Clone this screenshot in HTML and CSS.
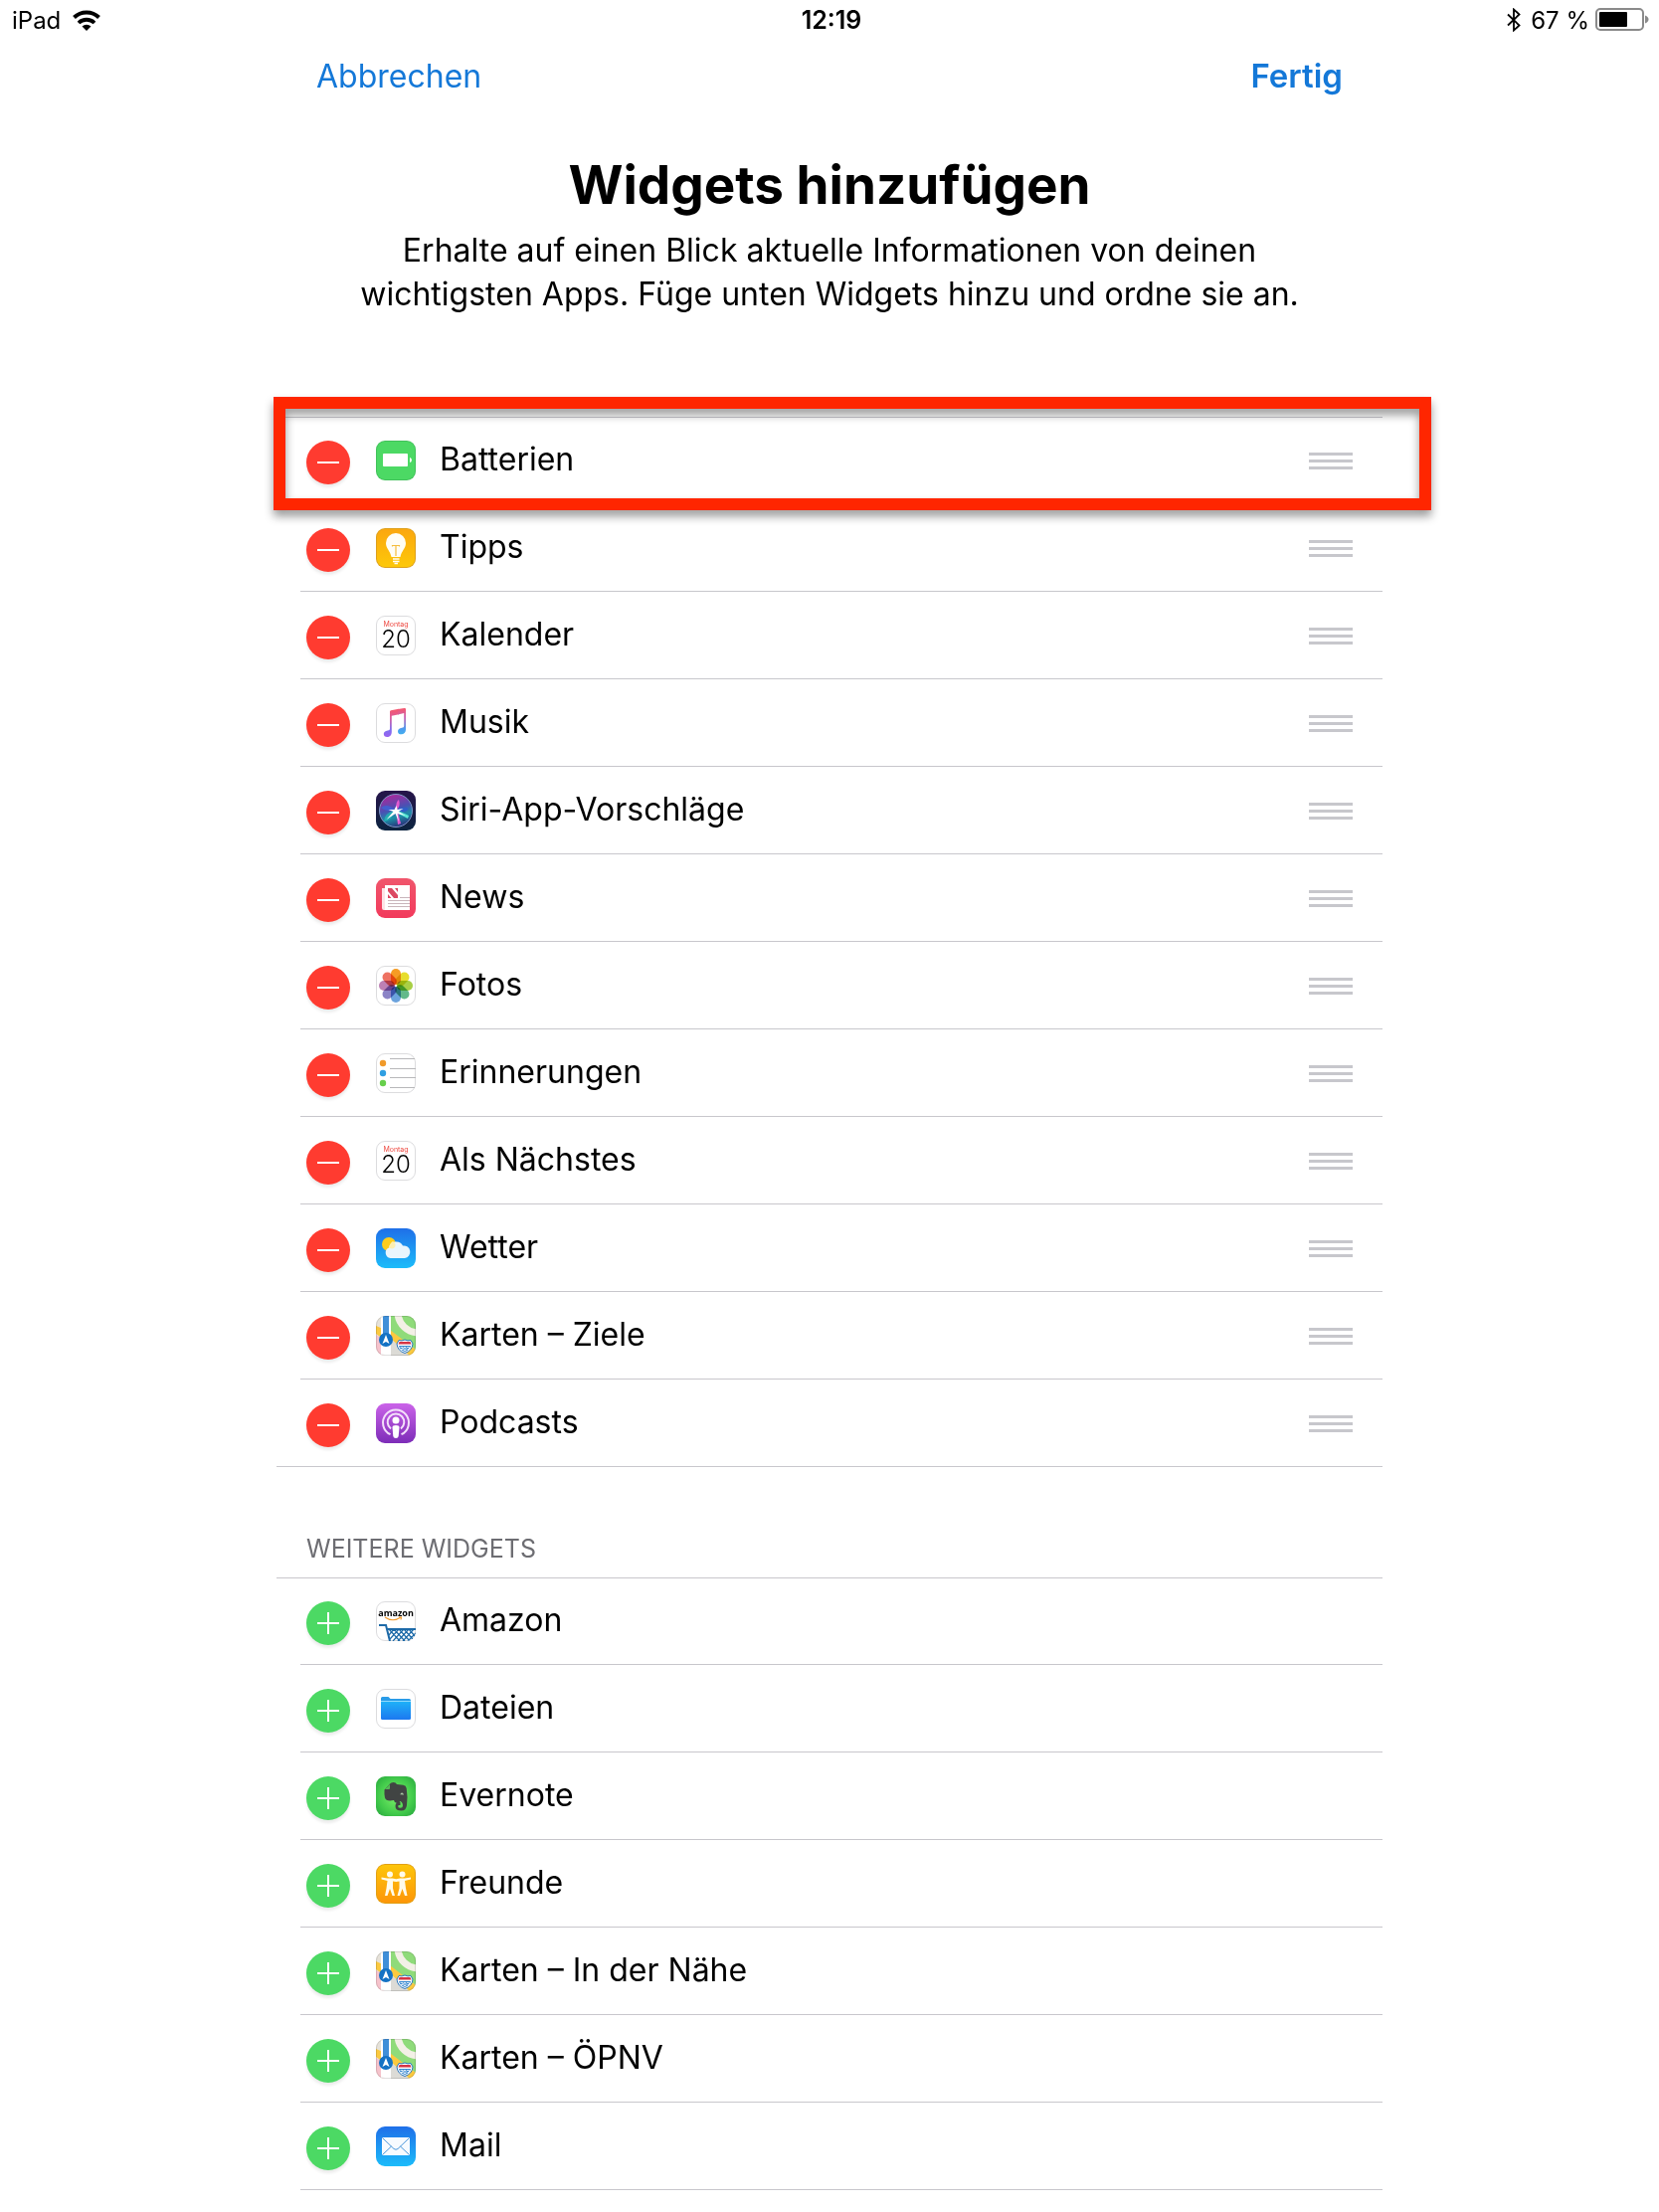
FILE: index.html
```html
<!DOCTYPE html>
<html lang="de">
<head>
    <meta charset="UTF-8">
    <meta name="viewport" content="width=device-width, initial-scale=1.0">
    <title>Widgets hinzufügen</title>
    <link rel="stylesheet" href="styles.css">
</head>
<body>
    <!-- shared icons -->
    <svg class="sprite" aria-hidden="true">
        <defs>
            <linearGradient id="tips-bg" x1="0" y1="0" x2="0" y2="1"><stop offset="0" stop-color="#fba70f"/><stop offset="1" stop-color="#fdc809"/></linearGradient>
            <linearGradient id="note" x1="0" y1="0" x2="0" y2="1"><stop offset="0" stop-color="#f7566b"/><stop offset=".3" stop-color="#dd5c9c"/><stop offset=".75" stop-color="#7e6ff0"/><stop offset="1" stop-color="#9b62f0"/></linearGradient>
            <linearGradient id="note-right" x1="0" y1="0" x2="0" y2="1"><stop offset="0" stop-color="#f7566b"/><stop offset=".35" stop-color="#c963b4"/><stop offset=".8" stop-color="#4a9cf0"/><stop offset="1" stop-color="#45b0ee"/></linearGradient>
            <linearGradient id="siri-bg" x1="0" y1="0" x2="0" y2="1"><stop offset="0" stop-color="#26154a"/><stop offset="1" stop-color="#0c2440"/></linearGradient>
            <linearGradient id="siri-orb" x1=".3" y1="0" x2=".6" y2="1"><stop offset="0" stop-color="#b0269a"/><stop offset=".45" stop-color="#4a50b4"/><stop offset=".7" stop-color="#1c8fa6"/><stop offset="1" stop-color="#2b2a78"/></linearGradient>
            <linearGradient id="news-bg" x1="0" y1="0" x2="0" y2="1"><stop offset="0" stop-color="#f0566c"/><stop offset="1" stop-color="#f23a5c"/></linearGradient>
            <linearGradient id="sky" x1="0" y1="0" x2="0" y2="1"><stop offset="0" stop-color="#1f6fe8"/><stop offset="1" stop-color="#1cbcfa"/></linearGradient>
            <linearGradient id="podcasts-bg" x1="0" y1="0" x2="0" y2="1"><stop offset="0" stop-color="#cb63e9"/><stop offset="1" stop-color="#7d2db8"/></linearGradient>
            <linearGradient id="folder" x1="0" y1="0" x2="0" y2="1"><stop offset="0" stop-color="#1fb2f8"/><stop offset="1" stop-color="#1c78f0"/></linearGradient>
            <radialGradient id="evernote-bg" r=".7"><stop offset="0" stop-color="#7cf06a"/><stop offset=".6" stop-color="#44cc4c"/><stop offset="1" stop-color="#25a53c"/></radialGradient>
            <linearGradient id="friends-bg" x1="0" y1="0" x2="0" y2="1"><stop offset="0" stop-color="#fdc50a"/><stop offset="1" stop-color="#fd9608"/></linearGradient>
            <clipPath id="tile"><rect width="40" height="40" rx="9"/></clipPath>
        </defs>
        <symbol id="maps" viewBox="0 0 40 40">
            <g clip-path="url(#tile)">
                <rect width="40" height="40" fill="#e6e2d9"/>
                <path d="M14 0h26v34L14 15z" fill="#8fdb7a"/>
                <path d="M0 19l14 8v13H0z" fill="#f6c3cc"/>
                <path d="M0 10v8l14 10V16z" fill="#fbc93f"/>
                <path d="M14 14l26 20v6h-9L14 22z" fill="#fbc93f"/>
                <path d="M14 22l20 18H14z" fill="#dcdbd6"/>
                <path d="M22-2a21 21 0 0 0 20 19" fill="none" stroke="#f3f0e6" stroke-width="7"/>
                <path d="M5 0h10v40H5z" fill="#fff"/>
                <path d="M7 0h6v22H7z" fill="#3f8fd8"/>
                <circle cx="10" cy="24" r="7" fill="#1472c4"/>
                <path d="M10 19l3.500 9L10 26l-3.500 2z" fill="#fff"/>
                <path d="M23 24.500q3 1 6-.500 3 1.500 6 .500l2 3.500q-.500 7-8 9.500-7.500-2.500-8-9.500z" fill="#fff" stroke="#2c77bd"/>
                <path d="M23.500 26h11l1 2.500h-13z" fill="#d53445"/>
                <path d="M23 30h12q-1 4.500-6 6-5-1.500-6-6z" fill="#3586cf"/>
                <path d="M24.500 31.500h2.500v2h-2M28 31.500h2v3h-2zM31 31.500h2.500v2h-2" fill="none" stroke="#fff" stroke-width=".8"/>
            </g>
            <rect x=".5" y=".5" width="39" height="39" rx="8.5" fill="none" stroke="#000" stroke-opacity=".12"/>
        </symbol>
    </svg>

    <header class="status-bar">
        <div class="status-left">
            <span>iPad</span>
            <svg class="wifi" viewBox="0 0 28 21" aria-label="WLAN">
                <path d="M1.500 7.500a18 18 0 0 1 25 0" fill="none" stroke="#000" stroke-width="4"/>
                <path d="M6 13a11.500 11.500 0 0 1 16 0" fill="none" stroke="#000" stroke-width="3.800"/>
                <path d="M9.500 16.500a6.500 6.500 0 0 1 9 0L14 21z"/>
            </svg>
        </div>
        <time class="clock">12:19</time>
        <div class="status-right">
            <svg class="bluetooth" viewBox="0 0 14 24" aria-label="Bluetooth">
                <path d="M1 6.500l11.500 11L7 22.500v-21l5.500 5L1 17.500" fill="none" stroke="#000" stroke-width="1.800"/>
            </svg>
            <span>67 %</span>
            <svg class="battery" viewBox="0 0 54 24" aria-label="Batterie">
                <rect x="1" y="1" width="47" height="21" rx="4" fill="#fff" stroke="#8a8a8a" stroke-width="2"/>
                <rect x="4" y="4" width="28" height="15" rx="1" />
                <path d="M50 7.500q3.500 1.500 3.500 4t-3.500 4z" fill="#8a8a8a"/>
            </svg>
        </div>
    </header>

    <main class="page">
        <nav class="toolbar">
            <button class="cancel">Abbrechen</button>
            <button class="done">Fertig</button>
        </nav>

        <h1>Widgets hinzufügen</h1>
        <p class="intro">Erhalte auf einen Blick aktuelle Informationen von deinen<br>wichtigsten Apps. Füge unten Widgets hinzu und ordne sie an.</p>

        <ul class="widgets active">
            <li class="row highlighted">
                <button class="toggle remove" aria-label="Batterien entfernen"></button>
                <svg class="app-icon" viewBox="0 0 40 40">
                    <rect width="40" height="40" rx="9" fill="#42c15b"/>
                    <rect x="1" y="1" width="38" height="38" rx="8" fill="#4cd964"/>
                    <rect x="7" y="13" width="25" height="13" rx="1" fill="#fff"/>
                    <path d="M34 17q2 .500 2 2.500t-2 2.500z" fill="#fff"/>
                </svg>
                <span class="name">Batterien</span>
                <button class="handle" aria-label="Batterien verschieben"></button>
            </li>
            <li class="row">
                <button class="toggle remove" aria-label="Tipps entfernen"></button>
                <svg class="app-icon" viewBox="0 0 40 40">
                    <rect width="40" height="40" rx="9" fill="#dda01c"/>
                    <rect x="1" y="1" width="38" height="38" rx="8" fill="url(#tips-bg)"/>
                    <path d="M20 5a10 10 0 0 1 10 10c0 5.500-4.500 8-5.500 14h-9C14.500 23 10 20.500 10 15A10 10 0 0 1 20 5z" fill="#fffdf4"/>
                    <path d="M17 31h6.500M17 33.500h6.500M18.500 35.500h3.500" stroke="#fffdf4" stroke-width="1.300"/>
                    <path d="M16.500 18.500v-1h7v1M20 17.500V28" fill="none" stroke="#f5bd3c" stroke-width="1.200"/>
                </svg>
                <span class="name">Tipps</span>
                <button class="handle" aria-label="Tipps verschieben"></button>
            </li>
            <li class="row">
                <button class="toggle remove" aria-label="Kalender entfernen"></button>
                <svg class="app-icon" viewBox="0 0 40 40">
                    <rect x=".5" y=".5" width="39" height="39" rx="8.500" fill="#fff" stroke="#dcdcde"/>
                    <text x="20" y="11" class="cal-day">Montag</text>
                    <text x="20" y="32" class="cal-date">20</text>
                </svg>
                <span class="name">Kalender</span>
                <button class="handle" aria-label="Kalender verschieben"></button>
            </li>
            <li class="row">
                <button class="toggle remove" aria-label="Musik entfernen"></button>
                <svg class="app-icon" viewBox="0 0 40 40">
                    <rect x=".5" y=".5" width="39" height="39" rx="8.500" fill="#fff" stroke="#dcdcde"/>
                    <path d="M14 8.500q0-1 1-1.200l8-1.500v5.500l-7.200 1.500V29c0 3-2 5-4.600 5-2 0-3.400-1.200-3.400-3s1.400-3.200 4-3.600c1.600-.300 2.200-.700 2.200-2z" fill="url(#note)"/>
                    <path d="M22 6l6.500-1q1.500-.200 1.500 1v20.500c0 3-2 4.800-4.500 4.800-2 0-3.500-1-3.500-2.900 0-2 1.500-3.200 4-3.600 1.600-.300 2.200-.700 2.200-2V10L22 11.500z" fill="url(#note-right)"/>
                </svg>
                <span class="name">Musik</span>
                <button class="handle" aria-label="Musik verschieben"></button>
            </li>
            <li class="row">
                <button class="toggle remove" aria-label="Siri-App-Vorschläge entfernen"></button>
                <svg class="app-icon" viewBox="0 0 40 40">
                    <rect width="40" height="40" rx="9" fill="url(#siri-bg)"/>
                    <circle cx="20" cy="20" r="16.500" fill="url(#siri-orb)" stroke="#7d96c6"/>
                    <path d="M19 19Q11 12 5 17q5 4 14 3z" fill="#3d63d8" opacity=".8"/>
                    <path d="M20 19q8-4 13-1-3 5-12 2z" fill="#2d5bd0" opacity=".8"/>
                    <path d="M18 20Q9 22 8 31q8-1 11-10z" fill="#22b8b4" opacity=".8"/>
                    <path d="M20 18q0-7 3-9 2 6-2 10zM20 20l2 14 3-1-3-12z" fill="#e45ad0"/>
                    <path d="M20 19l13 6-1 3-13-7z" fill="#59e8d4"/>
                    <path d="M20.500 15l1 4 6-1-5 3 7 4-8-2 1.500 8-3.500-8-9 6 7-8-5-2 6 0z" fill="#fff"/>
                </svg>
                <span class="name">Siri-App-Vorschläge</span>
                <button class="handle" aria-label="Siri-App-Vorschläge verschieben"></button>
            </li>
            <li class="row">
                <button class="toggle remove" aria-label="News entfernen"></button>
                <svg class="app-icon" viewBox="0 0 40 40">
                    <rect width="40" height="40" rx="9" fill="url(#news-bg)"/>
                    <path d="M6 10h3v22H8q-2 0-2-2z" fill="#fde3e6"/>
                    <path d="M9 7h25v25H9z" fill="#fff"/>
                    <path d="M12 10h4l6 7v3h-4l-6-7zM19 10h3v4zM12 16l3.500 4H12z" fill="#dc4962"/>
                    <path d="M24 19.500h10M12 22.500h22M12 25.500h22M12 28.500h22" stroke="#c9b5bb"/>
                </svg>
                <span class="name">News</span>
                <button class="handle" aria-label="News verschieben"></button>
            </li>
            <li class="row">
                <button class="toggle remove" aria-label="Fotos entfernen"></button>
                <svg class="app-icon" viewBox="0 0 40 40">
                    <rect x=".5" y=".5" width="39" height="39" rx="8.500" fill="#fff" stroke="#dcdcde"/>
                    <g class="petals">
                        <rect x="15" y="3" width="10" height="16" rx="5" fill="#f69c25"/>
                        <rect x="15" y="3" width="10" height="16" rx="5" fill="#e7dd2c" transform="rotate(45 20 20)"/>
                        <rect x="15" y="3" width="10" height="16" rx="5" fill="#a8cf45" transform="rotate(90 20 20)"/>
                        <rect x="15" y="3" width="10" height="16" rx="5" fill="#62b98a" transform="rotate(135 20 20)"/>
                        <rect x="15" y="3" width="10" height="16" rx="5" fill="#6ba3dd" transform="rotate(180 20 20)"/>
                        <rect x="15" y="3" width="10" height="16" rx="5" fill="#8b83c6" transform="rotate(225 20 20)"/>
                        <rect x="15" y="3" width="10" height="16" rx="5" fill="#bd80b4" transform="rotate(270 20 20)"/>
                        <rect x="15" y="3" width="10" height="16" rx="5" fill="#ee7262" transform="rotate(315 20 20)"/>
                    </g>
                </svg>
                <span class="name">Fotos</span>
                <button class="handle" aria-label="Fotos verschieben"></button>
            </li>
            <li class="row">
                <button class="toggle remove" aria-label="Erinnerungen entfernen"></button>
                <svg class="app-icon" viewBox="0 0 40 40">
                    <rect x=".5" y=".5" width="39" height="39" rx="8.500" fill="#fff" stroke="#dcdcde"/>
                    <circle cx="7" cy="10" r="3.200" fill="#f09a2a"/>
                    <circle cx="7" cy="20" r="3.200" fill="#2f9fe2"/>
                    <circle cx="7" cy="30" r="3.200" fill="#67cf4c"/>
                    <path d="M14 5.500h25M14 15.500h26M14 24.500h26M14 34.500h25" stroke="#b8b8ba"/>
                </svg>
                <span class="name">Erinnerungen</span>
                <button class="handle" aria-label="Erinnerungen verschieben"></button>
            </li>
            <li class="row">
                <button class="toggle remove" aria-label="Als Nächstes entfernen"></button>
                <svg class="app-icon" viewBox="0 0 40 40">
                    <rect x=".5" y=".5" width="39" height="39" rx="8.500" fill="#fff" stroke="#dcdcde"/>
                    <text x="20" y="11" class="cal-day">Montag</text>
                    <text x="20" y="32" class="cal-date">20</text>
                </svg>
                <span class="name">Als Nächstes</span>
                <button class="handle" aria-label="Als Nächstes verschieben"></button>
            </li>
            <li class="row">
                <button class="toggle remove" aria-label="Wetter entfernen"></button>
                <svg class="app-icon" viewBox="0 0 40 40">
                    <rect width="40" height="40" rx="9" fill="url(#sky)"/>
                    <circle cx="13" cy="16" r="7" fill="#fdcd1e"/>
                    <path d="M14.500 30a5.500 5.500 0 0 1-1.500-10.500A7.500 7.500 0 0 1 27 17.500a6.300 6.300 0 1 1 2 12.500z" fill="#e9f5fd"/>
                    <path d="M13 19.500q.500-4 4-6.500 3 1.500 2.500 5-1.500 4-6.500 1.500z" fill="#fdeeb0"/>
                </svg>
                <span class="name">Wetter</span>
                <button class="handle" aria-label="Wetter verschieben"></button>
            </li>
            <li class="row">
                <button class="toggle remove" aria-label="Karten – Ziele entfernen"></button>
                <svg class="app-icon"><use href="#maps"/></svg>
                <span class="name">Karten – Ziele</span>
                <button class="handle" aria-label="Karten – Ziele verschieben"></button>
            </li>
            <li class="row">
                <button class="toggle remove" aria-label="Podcasts entfernen"></button>
                <svg class="app-icon" viewBox="0 0 40 40">
                    <rect width="40" height="40" rx="9" fill="url(#podcasts-bg)"/>
                    <path d="M14.500 31.200a13 13 0 1 1 11 0M15 25.500a8.300 8.300 0 1 1 10 0" fill="none" stroke="#f3e0fa" stroke-width="2"/>
                    <circle cx="20" cy="17" r="3.500" fill="#fff"/>
                    <path d="M16.500 24q0-2 3.500-2t3.500 2l-.800 9q-.300 2-2.700 2t-2.700-2z" fill="#fff"/>
                </svg>
                <span class="name">Podcasts</span>
                <button class="handle" aria-label="Podcasts verschieben"></button>
            </li>
        </ul>

        <h2>WEITERE WIDGETS</h2>

        <ul class="widgets">
            <li class="row">
                <button class="toggle add" aria-label="Amazon hinzufügen"></button>
                <svg class="app-icon" viewBox="0 0 40 40">
                    <rect x=".5" y=".5" width="39" height="39" rx="8.500" fill="#fff" stroke="#dcdcde"/>
                    <text x="20" y="15" class="amazon">amazon</text>
                    <path d="M9 16q8 5.500 16 0M23 16h2.500l-.500 2.500" fill="none" stroke="#f39a2b" stroke-width="1.200"/>
                    <g clip-path="url(#tile)" fill="none" stroke="#1d6aa8">
                        <path d="M3 24h7l4 16" stroke-width="2"/>
                        <path d="M11 28h29" stroke-width="2"/>
                        <path d="M13 28l11 12M18 28l11 12M23 28l11 12M28 28l9 10M33 28l7 8M18 28l-5 6M23 28l-9 10M28 28L17 40M33 28L22 40M38 28L27 40M40 32l-8 8" stroke-width="1.200"/>
                    </g>
                </svg>
                <span class="name">Amazon</span>
            </li>
            <li class="row">
                <button class="toggle add" aria-label="Dateien hinzufügen"></button>
                <svg class="app-icon" viewBox="0 0 40 40">
                    <rect x=".5" y=".5" width="39" height="39" rx="8.500" fill="#fff" stroke="#dcdcde"/>
                    <path d="M5 12V9.500Q5 8 6.500 8H12q1 0 1.500 1t1.500 1h18.500q1.500 0 1.500 2z" fill="#2a9ce8"/>
                    <path d="M5 12.500h30V29.500q0 1.500-1.500 1.500h-27Q5 31 5 29.500z" fill="url(#folder)"/>
                </svg>
                <span class="name">Dateien</span>
            </li>
            <li class="row">
                <button class="toggle add" aria-label="Evernote hinzufügen"></button>
                <svg class="app-icon" viewBox="0 0 40 40">
                    <rect width="40" height="40" rx="9" fill="url(#evernote-bg)"/>
                    <path d="M8.500 13.500L14 7.500q1-1.500 3.500-1.500 2.500 0 3.500 2l6.500.800q2.800.400 3.200 3.200 1.500 9 .300 17-.600 5.500-5.500 5.500-6 0-6-4.500 0-4 4-4h1v3h-1.300q-1 0-1 1.200 0 1.600 2.500 1.600 2.300 0 2.300-2.300 0-3.500-2.500-4.500-1.500 2.500-4.500 1.500-1.500-.500-2-2.500-8 1.500-9-2.500-.800-3-.500-7z" fill="#414443"/>
                    <path d="M9 13l5-5v4q0 1-1 1z" fill="#54b957"/>
                    <path d="M24.500 18.500q0-2 1.600-2t1.700 2.300q-1.300-.800-3.300-.300z" fill="#a9c7a4"/>
                </svg>
                <span class="name">Evernote</span>
            </li>
            <li class="row">
                <button class="toggle add" aria-label="Freunde hinzufügen"></button>
                <svg class="app-icon" viewBox="0 0 40 40">
                    <rect width="40" height="40" rx="9" fill="#e2a014"/>
                    <rect x="1" y="1" width="38" height="38" rx="8" fill="url(#friends-bg)"/>
                    <g fill="#fffbea">
                        <circle cx="14" cy="10.500" r="3"/>
                        <circle cx="26.500" cy="10.500" r="3"/>
                        <path d="M5.500 13.500l6 1h5l3.800.700 3.700-.700h5l6-1v2l-6 1.500 1 7.500 1.500 7.500H29L26.500 25 24 32h-2.500l2-7.500v-7l-3.200.500-3.300-.500v7l2 7.500H16.500L14 25l-2.500 7H9l1.500-7.500 1-7.500-6-1.500z"/>
                    </g>
                </svg>
                <span class="name">Freunde</span>
            </li>
            <li class="row">
                <button class="toggle add" aria-label="Karten – In der Nähe hinzufügen"></button>
                <svg class="app-icon"><use href="#maps"/></svg>
                <span class="name">Karten – In der Nähe</span>
            </li>
            <li class="row">
                <button class="toggle add" aria-label="Karten – ÖPNV hinzufügen"></button>
                <svg class="app-icon"><use href="#maps"/></svg>
                <span class="name">Karten – ÖPNV</span>
            </li>
            <li class="row">
                <button class="toggle add" aria-label="Mail hinzufügen"></button>
                <svg class="app-icon" viewBox="0 0 40 40">
                    <rect width="40" height="40" rx="9" fill="url(#sky)"/>
                    <rect x="6" y="11" width="28" height="18" rx="1" fill="#f7fbff"/>
                    <path d="M6.500 11.500L18 22.500q2 1.500 4 0l11.500-11M6.500 28.500l9-8.500M33.500 28.500l-9-8.500" fill="none" stroke="#4a97dc"/>
                </svg>
                <span class="name">Mail</span>
            </li>
        </ul>
    </main>
</body>
</html>
```

FILE: styles.css
```css
body {
    margin: 0;
    background-color: #fff;
    color: #000;
    font-family: Inter, "Liberation Sans", sans-serif;
}
button {
    padding: 0;
    border: none;
    background: none;
    font-family: inherit;
    cursor: pointer;
}
.sprite {
    position: absolute;
    width: 0;
    height: 0;
}

/* status bar */
.status-bar {
    display: grid;
    grid-template-columns: 1fr auto 1fr;
    align-items: center;
    height: 40px;
    padding: 0 8px 0 12px;
    font-size: 24px;
}
.status-left,
.status-right {
    display: flex;
    align-items: center;
}
.status-left {
    gap: 12px;
}
.status-right {
    justify-content: flex-end;
    gap: 6px;
    padding-right: 2px;
}
.clock {
    font-size: 25px;
    font-weight: 600;
}
.wifi {
    width: 28px;
    height: 21px;
}
.bluetooth {
    width: 14px;
    height: 24px;
    margin-right: 4px;
}
.battery {
    width: 54px;
    height: 24px;
}

/* header */
.page {
    width: calc(100% * 2 / 3);
    margin: 0 auto;
}
.toolbar {
    display: flex;
    justify-content: space-between;
    height: 72px;
    padding: 0 40px;
}
.toolbar button {
    font-size: 32px;
    color: #1478d8;
}
.toolbar .done {
    font-size: 33px;
    font-weight: 600;
}
h1 {
    margin: 42px 0 12px;
    font-size: 53px;
    line-height: 64px;
    text-align: center;
}
.intro {
    margin: 0 0 101px;
    font-size: 32px;
    line-height: 44px;
    text-align: center;
}

/* widget lists */
.widgets {
    margin: 0;
    padding: 0 0 0 24px;
    list-style: none;
    box-shadow: inset 0 1px #c8c7cc;
}
.row {
    position: relative;
    display: flex;
    align-items: center;
    box-sizing: border-box;
    height: 88px;
    padding: 0 30px 0 6px;
    border-bottom: 1px solid #c8c7cc;
}
.active .row:last-child {
    margin-left: -24px;
    padding-left: 30px;
}
.toggle {
    position: relative;
    flex: none;
    width: 44px;
    height: 44px;
    margin: 4px 26px 0 0;
    border-radius: 50%;
    box-shadow: 0 3px 3px rgba(0, 0, 0, 0.08);
}
.remove {
    background-color: #ff3b30;
}
.add {
    background-color: #4cd964;
}
.toggle::before,
.add::after {
    content: "";
    position: absolute;
    top: 21px;
    left: 11px;
    width: 22px;
    height: 2px;
    background-color: #fff;
}
.add::after {
    transform: rotate(90deg);
}
.app-icon {
    flex: none;
    width: 40px;
    height: 40px;
    margin-right: 24px;
}
.name {
    flex: 1;
    padding-bottom: 2px;
    font-size: 32px;
}
.handle {
    width: 44px;
    height: 17px;
    margin-top: 2px;
    background: linear-gradient(#c7c7cc 3px, transparent 3px) 0 0 / 44px 7px;
}
h2 {
    margin: 0;
    padding: 66px 30px 13px;
    font-size: 25px;
    font-weight: 400;
    line-height: 32px;
    color: #6d6d72;
}

/* red marker around the first widget */
.highlighted::after {
    content: "";
    position: absolute;
    top: -20px;
    right: -49px;
    bottom: -7px;
    left: -27px;
    z-index: 1;
    border: 12px solid #ff2600;
    filter: drop-shadow(0 6px 5px rgba(0, 0, 0, 0.4));
    pointer-events: none;
}

/* icon details */
.cal-day {
    font-size: 7px;
    fill: #ee4a42;
    text-anchor: middle;
}
.cal-date {
    font-size: 24px;
    font-weight: 300;
    text-anchor: middle;
}
.amazon {
    font-size: 9px;
    font-weight: 700;
    font-family: "Open Sans", sans-serif;
    text-anchor: middle;
}
.petals rect {
    mix-blend-mode: multiply;
}
```
